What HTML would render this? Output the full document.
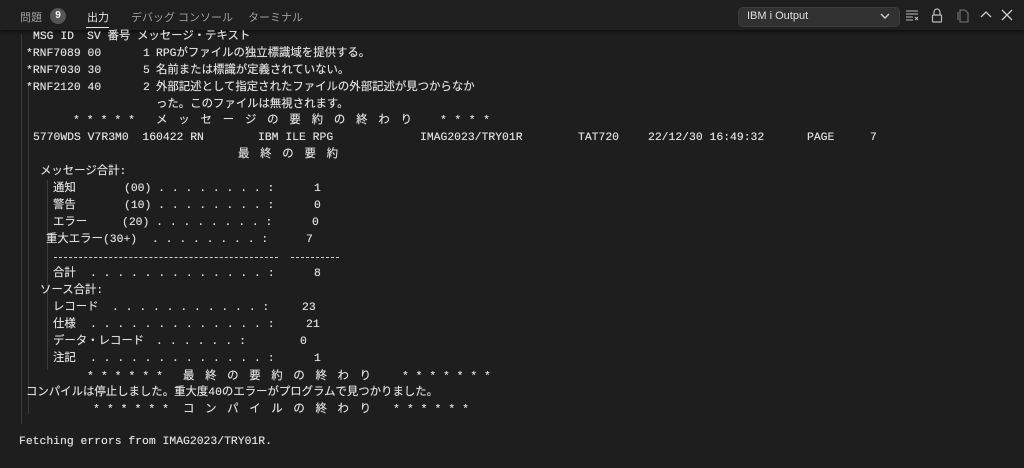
<!DOCTYPE html>
<html><head><meta charset="utf-8"><style>
html,body{margin:0;padding:0;background:#1e1e1e;width:1024px;height:468px;overflow:hidden;position:relative}
.hd{position:absolute;left:0;top:0;width:1024px;height:30px;background:#1f1f1f;box-shadow:0 2px 3px rgba(0,0,0,.5);font-family:"Liberation Sans","Noto Sans CJK JP",sans-serif;font-size:11px;color:#9d9d9d}
.hd span{position:absolute;top:9px}
.s{position:absolute;font-family:"Liberation Mono","Noto Sans CJK JP",monospace;font-size:11.4px;color:#dedede;white-space:pre;line-height:17px;text-shadow:0 0 0.4px #dedede}
.j{display:inline-block;text-align:justify;text-align-last:justify}
.g{position:absolute;width:1px;background:#3a3a3a}
</style></head><body>
<div class="hd">
<span style="left:20px">問題</span>
<div style="position:absolute;left:50px;top:8px;width:16px;height:16px;border-radius:8px;background:#555;color:#fff;font-size:10px;text-align:center;line-height:16px;font-weight:bold">9</div>
<span style="left:87px;color:#e6e6e6">出力</span>
<div style="position:absolute;left:86px;top:27px;width:23px;height:1px;background:#e6e6e6"></div>
<span style="left:131px">デバッグ コンソール</span>
<span style="left:248px">ターミナル</span>
<div style="position:absolute;left:738px;top:7px;width:160px;height:18px;border-radius:5px;background:#313131;border:1px solid #3c3c3c"></div>
<span style="left:747px;top:10px;color:#e0e0e0">IBM i Output</span>
<svg style="position:absolute;left:878px;top:10px" width="14" height="12"><path d="M3 4l4 4 4-4" stroke="#ccc" stroke-width="1.4" fill="none"/></svg>
<svg style="position:absolute;left:904px;top:8px" width="16" height="16" stroke="#bbb" stroke-width="1.1" fill="none"><path d="M2 3h12M2 6h12M2 9h7M2 12h7M11 9l3 3M14 9l-3 3"/></svg>
<svg style="position:absolute;left:929px;top:7px" width="16" height="17" stroke="#bbb" stroke-width="1.2" fill="none"><path d="M5 8V5a3 3 0 0 1 6 0v3"/><rect x="3.5" y="8" width="9" height="7" rx="1"/></svg>
<svg style="position:absolute;left:955px;top:7px" width="16" height="17" stroke="#777" stroke-width="1.1" fill="none"><path d="M5 3h5l3 3v9H5z M3 5v8"/></svg>
<svg style="position:absolute;left:979px;top:9px" width="14" height="12"><path d="M2 8l5-5 5 5" stroke="#ccc" stroke-width="1.3" fill="none"/></svg>
<svg style="position:absolute;left:1001px;top:9px" width="12" height="12"><path d="M1 1l10 10M11 1L1 11" stroke="#ccc" stroke-width="1.3"/></svg>
</div>
<div class="g" style="left:21px;top:34px;height:390px"></div>
<div class="g" style="left:28px;top:84px;height:330px"></div>
<div class="g" style="left:47px;top:180px;height:190px"></div>

<div class="s" style="left:33px;top:29px">MSG ID</div><div class="s" style="left:87px;top:29px">SV 番号</div><div class="s" style="left:137px;top:29px">メッセージ・テキスト</div>
<div class="s" style="left:26px;top:46px">*RNF7089 00</div><div class="s" style="left:143px;top:46px">1</div><div class="s" style="left:156px;top:46px">RPGがファイルの独立標識域を提供する。</div>
<div class="s" style="left:26px;top:63px">*RNF7030 30</div><div class="s" style="left:143px;top:63px">5</div><div class="s" style="left:156px;top:63px">名前または標識が定義されていない。</div>
<div class="s" style="left:26px;top:80px">*RNF2120 40</div><div class="s" style="left:143px;top:80px">2</div><div class="s" style="left:156px;top:80px">外部記述として指定されたファイルの外部記述が見つからなか</div>
<div class="s" style="left:156px;top:97px">った。このファイルは無視されます。</div>
<div class="s" style="left:73px;top:113px"><span class="j" style="width:62px">* * * * *</span></div><div class="s" style="left:156px;top:113px"><span class="j" style="width:256px">メ ッ セ ー ジ の 要 約 の 終 わ り</span></div><div class="s" style="left:440px;top:113px"><span class="j" style="width:50px">* * * *</span></div>
<div class="s" style="left:33px;top:130px">5770WDS V7R3M0  160422 RN</div><div class="s" style="left:258px;top:130px">IBM ILE RPG</div><div class="s" style="left:420px;top:130px">IMAG2023/TRY01R</div><div class="s" style="left:578px;top:130px">TAT720</div><div class="s" style="left:648px;top:130px">22/12/30 16:49:32</div><div class="s" style="left:807px;top:130px">PAGE</div><div class="s" style="left:870px;top:130px">7</div>
<div class="s" style="left:238px;top:147px"><span class="j" style="width:100px">最 終 の 要 約</span></div>
<div class="s" style="left:40px;top:164px">メッセージ合計:</div>
<div class="s" style="left:53px;top:181px">通知</div><div class="s" style="left:124px;top:181px"><span class="j" style="width:134px">(00) . . . . . . . . :</span></div><div class="s" style="left:314px;top:181px">1</div>
<div class="s" style="left:53px;top:198px">警告</div><div class="s" style="left:124px;top:198px"><span class="j" style="width:134px">(10) . . . . . . . . :</span></div><div class="s" style="left:314px;top:198px">0</div>
<div class="s" style="left:53px;top:215px">エラー</div><div class="s" style="left:122px;top:215px"><span class="j" style="width:134px">(20) . . . . . . . . :</span></div><div class="s" style="left:312px;top:215px">0</div>
<div class="s" style="left:46px;top:232px">重大エラー(30+)</div><div class="s" style="left:152px;top:232px"><span class="j" style="width:100px">. . . . . . . . :</span></div><div class="s" style="left:306px;top:232px">7</div>
<div style="position:absolute;left:54px;top:257px;width:224px;height:0;border-top:1px dashed #cfcfcf"></div><div style="position:absolute;left:291px;top:257px;width:48px;height:0;border-top:1px dashed #cfcfcf"></div>
<div class="s" style="left:53px;top:266px">合計</div><div class="s" style="left:90px;top:266px"><span class="j" style="width:168px">. . . . . . . . . . . . . :</span></div><div class="s" style="left:314px;top:266px">8</div>
<div class="s" style="left:40px;top:283px">ソース合計:</div>
<div class="s" style="left:53px;top:300px">レコード</div><div class="s" style="left:112px;top:300px"><span class="j" style="width:142px">. . . . . . . . . . . :</span></div><div class="s" style="left:302px;top:300px">23</div>
<div class="s" style="left:53px;top:317px">仕様</div><div class="s" style="left:90px;top:317px"><span class="j" style="width:168px">. . . . . . . . . . . . . :</span></div><div class="s" style="left:306px;top:317px">21</div>
<div class="s" style="left:53px;top:334px">データ・レコード</div><div class="s" style="left:156px;top:334px"><span class="j" style="width:90px">. . . . . . :</span></div><div class="s" style="left:300px;top:334px">0</div>
<div class="s" style="left:53px;top:351px">注記</div><div class="s" style="left:90px;top:351px"><span class="j" style="width:168px">. . . . . . . . . . . . . :</span></div><div class="s" style="left:314px;top:351px">1</div>
<div class="s" style="left:87px;top:369px"><span class="j" style="width:76px">* * * * * *</span></div><div class="s" style="left:183px;top:369px"><span class="j" style="width:188px">最 終 の 要 約 の 終 わ り</span></div><div class="s" style="left:402px;top:369px"><span class="j" style="width:88px">* * * * * * *</span></div>
<div class="s" style="left:26px;top:385px">コンパイルは停止しました。重大度40のエラーがプログラムで見つかりました。</div>
<div class="s" style="left:93px;top:402px"><span class="j" style="width:76px">* * * * * *</span></div><div class="s" style="left:183px;top:402px"><span class="j" style="width:188px">コ ン パ イ ル の 終 わ り</span></div><div class="s" style="left:393px;top:402px"><span class="j" style="width:76px">* * * * * *</span></div>
<div class="s" style="left:19px;top:434px">Fetching errors from IMAG2023/TRY01R.</div>
</body></html>
